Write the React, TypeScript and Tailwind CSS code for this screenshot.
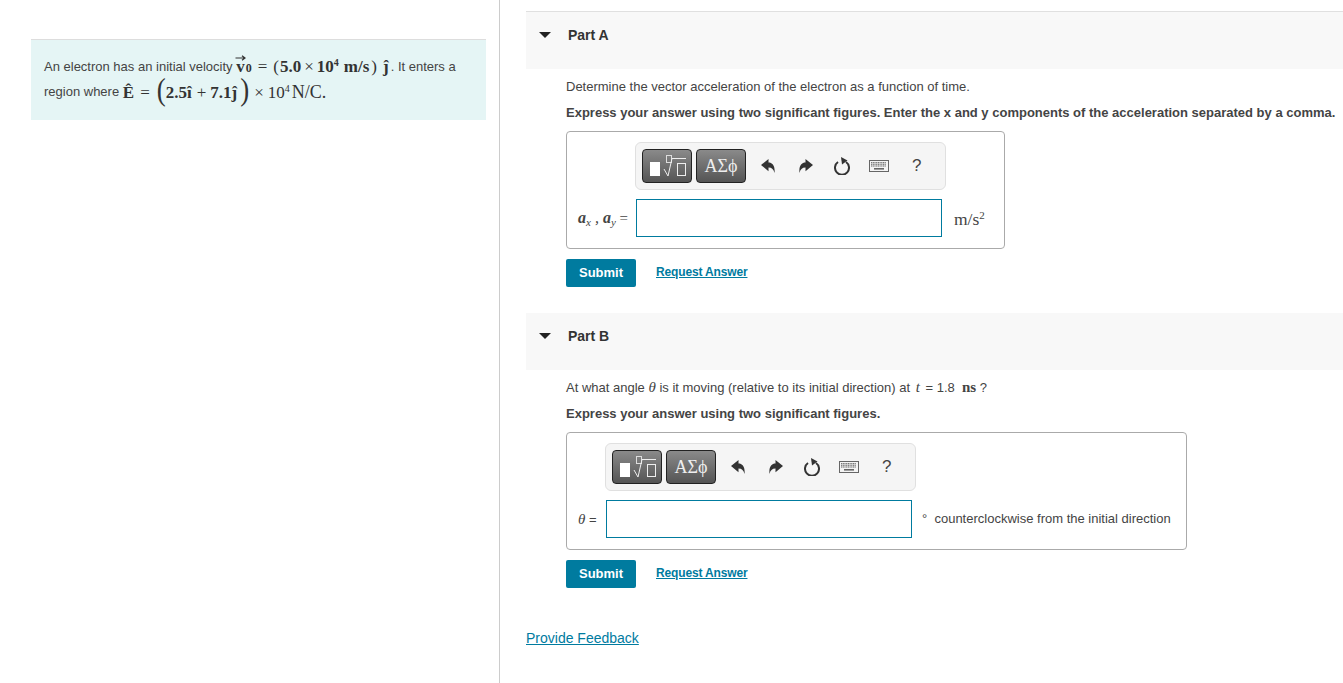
import React from "react";

const serif = "font-['Liberation_Serif',serif]";

function Undo({ flip = false }: { flip?: boolean }) {
  return (
    <svg width="14" height="14" viewBox="0 0 14 14" className={flip ? "-scale-x-100" : ""}>
      <path d="M0 6 L7.5 0 L7.5 3.6 C11.5 3.6 14.3 7 13.5 14 C12.6 10.5 11 8.6 7.5 8.6 L7.5 12.2 Z" fill="#333" />
    </svg>
  );
}

function Reset() {
  return (
    <svg width="16" height="18" viewBox="0 0 16 18">
      <path d="M4 5 A7 7 0 1 0 12 5" fill="none" stroke="#333" strokeWidth="2" />
      <path d="M7 0 L13.5 3.4 L8 7.5 Z" fill="#333" />
    </svg>
  );
}

function Keyboard() {
  const keys: React.ReactNode[] = [];
  for (let r = 0; r < 3; r++) {
    for (let c = 0; c < 9; c++) {
      keys.push(<rect key={`${r}-${c}`} x={2 + c * 1.7} y={2 + r * 1.7} width="1.2" height="1.2" fill="#777" />);
    }
  }
  return (
    <svg width="20" height="12" viewBox="0 0 20 12">
      <rect x="0.5" y="0.5" width="19" height="11" fill="#f4f4f4" stroke="#666" />
      {keys}
      <rect x="5" y="8" width="10" height="1.6" fill="#666" />
    </svg>
  );
}

function Toolbar({ offset }: { offset: string }) {
  return (
    <div className={`flex h-[48px] w-[311px] items-center rounded-[6px] border border-[#e0e0e0] bg-[#f5f5f5] pl-[6px] ${offset}`}>
      <div className="flex h-[34px] w-[50px] items-center rounded-[4px] border border-[#222] bg-gradient-to-b from-[#8a8a8a] to-[#555555] pl-[7px]">
        <svg width="36" height="28" viewBox="0 0 36 28">
          <rect x="0" y="10" width="10" height="14" fill="#fff" />
          <rect x="16.5" y="3.5" width="5" height="7" fill="none" stroke="#ddd" />
          <path d="M14 17 L18 24 L22 6.5 L36 6.5" fill="none" stroke="#eee" strokeWidth="1" />
          <rect x="27.5" y="11.5" width="8" height="12" fill="none" stroke="#eee" />
        </svg>
      </div>
      <div className={`ml-[4px] flex h-[34px] w-[50px] items-center justify-center rounded-[4px] border border-[#222] bg-gradient-to-b from-[#8a8a8a] to-[#555555] text-[18px] text-[#eee] ${serif}`}>
        ΑΣϕ
      </div>
      <div className="ml-[15px] flex w-[14px] justify-center"><Undo /></div>
      <div className="ml-[24px] flex w-[14px] justify-center"><Undo flip /></div>
      <div className="ml-[21px] flex w-[16px] justify-center"><Reset /></div>
      <div className="ml-[19px] flex w-[20px] justify-center"><Keyboard /></div>
      <div className="ml-[23px] text-[17px] text-[#444]">?</div>
    </div>
  );
}

function PartHeader({ label, border, height }: { label: string; border?: boolean; height: string }) {
  return (
    <div className={`flex items-start bg-[#f8f8f8] pl-[13px] pt-[15px] ${height} ${border ? "border-t border-[#e0e0e0]" : ""}`}>
      <div className="mt-[5px] h-0 w-0 border-x-[6px] border-t-[6px] border-x-transparent border-t-[#222]" />
      <div className="ml-[17px] text-[14px] leading-[16px] font-bold text-[#333]">{label}</div>
    </div>
  );
}

function Actions() {
  return (
    <div className="mt-[10px] flex items-center">
      <button className="h-[28px] w-[70px] rounded-[2px] bg-[#007b9f] text-[13px] font-bold text-white">Submit</button>
      <a className="ml-[20px] -mt-[2px] text-[12px] font-bold tracking-[-0.15px] text-[#007b9f] underline">Request Answer</a>
    </div>
  );
}

function Vec() {
  return (
    <b className="relative inline-block">
      v
      <svg width="11" height="6" viewBox="0 0 11 6" className="absolute left-[-1px] top-[1px]">
        <path d="M0.5 3 L9.5 3 M7 0.8 L10 3 L7 5.2" fill="none" stroke="#333" strokeWidth="1.2" />
      </svg>
    </b>
  );
}

export default function App() {
  return (
    <div className="flex h-[683px] w-[1343px] overflow-hidden bg-white font-['Liberation_Sans',sans-serif] text-[13px] text-[#444]">
      <div className="w-[500px] shrink-0 border-r border-[#cccccc] pl-[31px] pr-[13px] pt-[39px]">
        <div className="h-[81px] border-t border-[#dddddd] bg-[#e5f5f5] pl-[13px] pt-[14px]">
          <div className="flex h-[25px] items-center whitespace-nowrap">
            <span>An electron has an initial velocity&nbsp;</span>
            <span className={`${serif} flex items-baseline whitespace-pre text-[17px] text-[#333]`}>
              <Vec />
              <b className="ml-[1px] text-[12px]">0</b>
              <span className="ml-[6px]">=</span>
              <span className="ml-[6px]">(</span>
              <b className="ml-[1px]">5.0</b>
              <span className="ml-[3px]">×</span>
              <b className="ml-[3px]">10</b>
              <b className="-translate-y-[6px] text-[10px] leading-[10px]">4</b>
              <b className="ml-[5px]">m/s</b>
              <span className="ml-[2px]">)</span>
              <b className="ml-[6px]">ĵ</b>
            </span>
            <span className="ml-[2px]">. It enters a</span>
          </div>
          <div className="flex h-[25px] items-center whitespace-nowrap">
            <span>region where&nbsp;</span>
            <span className={`${serif} flex -translate-y-[1px] items-baseline whitespace-pre text-[17px] text-[#333]`}>
              <b>Ê</b>
              <span className="ml-[6px]">=</span>
              <span className="ml-[7px] translate-y-[1px] scale-y-[1.15] text-[27px] leading-[26px]">(</span>
              <b>2.5</b>
              <b>î</b>
              <span className="ml-[5px]">+</span>
              <b className="ml-[4px]">7.1</b>
              <b>ĵ</b>
              <span className="ml-[3px] translate-y-[1px] scale-y-[1.15] text-[27px] leading-[26px]">)</span>
              <span className="ml-[5px]">×</span>
              <span className="ml-[4px]">10</span>
              <span className="-translate-y-[6px] text-[10px] leading-[10px]">4</span>
              <span className="ml-[2px] text-[18px]">N/C.</span>
            </span>
          </div>
        </div>
      </div>

      <div className="flex-1 pl-[26px] pt-[11px]">
        <PartHeader label="Part A" border height="h-[58px]" />
        <div className="pl-[40px]">
          <p className="mt-[11px] leading-[14px]">Determine the vector acceleration of the electron as a function of time.</p>
          <p className="mt-[12px] whitespace-nowrap leading-[14px] font-bold">
            Express your answer using two significant figures. Enter the x and y components of the acceleration separated by a comma.
          </p>
          <div className="mt-[11px] w-[439px] rounded-[4px] border border-[#aaaaaa] pb-[11px] pl-[11px] pt-[10px]">
            <Toolbar offset="ml-[57px]" />
            <div className="mt-[9px] flex h-[38px] items-center">
              <span className={`${serif} flex w-[50px] items-baseline whitespace-pre text-[16px] italic`}>
                <b>a</b><sub className="text-[11px]">x</sub><span> , </span><b>a</b><sub className="text-[11px]">y</sub><span className="text-[15px] not-italic"> =</span>
              </span>
              <div className="ml-[8px] h-[38px] w-[306px] border border-[#007b9f]" />
              <span className={`${serif} ml-[12px] mt-[2px] text-[17.5px]`}>m/s<sup className="text-[11px]">2</sup></span>
            </div>
          </div>
          <Actions />
        </div>

        <div className="mt-[26px]">
          <PartHeader label="Part B" height="h-[57px]" />
        </div>
        <div className="pl-[40px]">
          <p className="mt-[10px] whitespace-nowrap leading-[14px]">
            At what angle <i className={`${serif} text-[15px]`}>θ</i> is it moving (relative to its initial direction) at <i className={`${serif} mx-[2px] text-[15px]`}>t</i> = 1.8 &nbsp;<span className={`${serif} text-[15px] font-bold`}>ns</span> ?
          </p>
          <p className="mt-[12px] leading-[14px] font-bold">Express your answer using two significant figures.</p>
          <div className="mt-[11px] w-[621px] rounded-[4px] border border-[#aaaaaa] pb-[11px] pl-[11px] pt-[10px]">
            <Toolbar offset="ml-[27px]" />
            <div className="mt-[9px] flex h-[38px] items-center">
              <span className="w-[19px] whitespace-nowrap"><i className={`${serif} text-[15px]`}>θ</i> =</span>
              <div className="ml-[9px] h-[38px] w-[306px] border border-[#007b9f]" />
              <span className="ml-[10px] whitespace-nowrap">°&nbsp;&nbsp;counterclockwise from the initial direction</span>
            </div>
          </div>
          <Actions />
        </div>

        <a className="mt-[42px] block text-[14px] leading-[16px] text-[#007b9f] underline">Provide Feedback</a>
      </div>
    </div>
  );
}
